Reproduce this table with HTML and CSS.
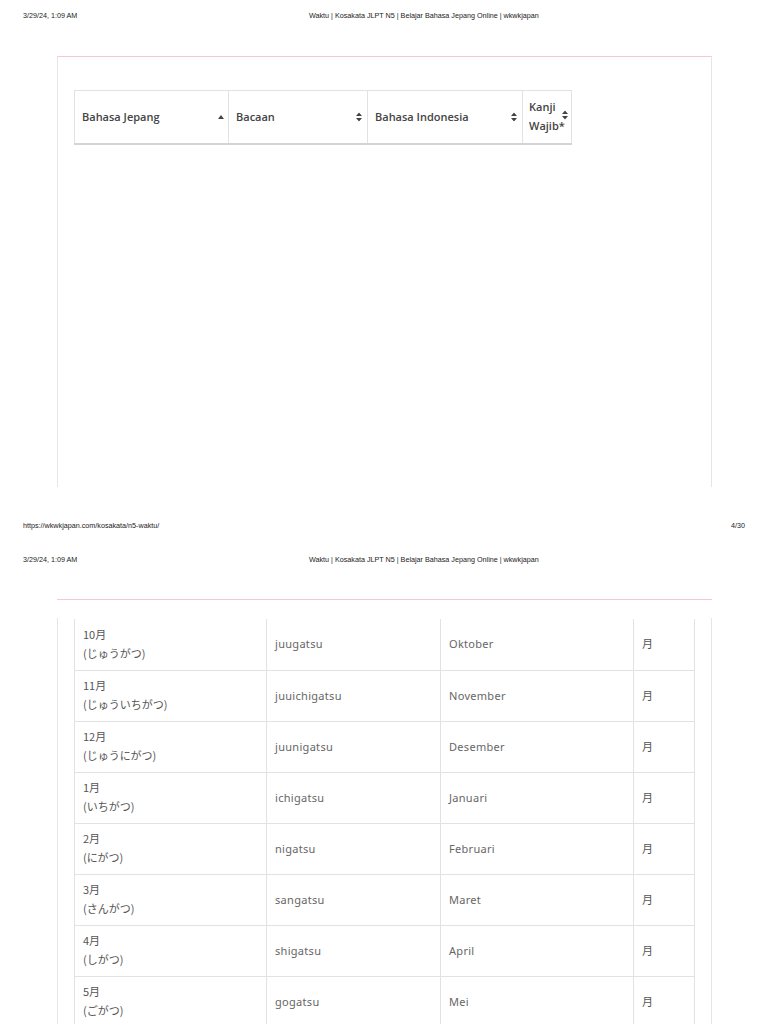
FILE: index.html
```html
<!DOCTYPE html>
<html lang="id">
<head>
<meta charset="utf-8">
<title>Waktu | Kosakata JLPT N5</title>
<link rel="stylesheet" href="styles.css">
</head>
<body>
<div class="print-head">
  <span class="ph-date">3/29/24, 1:09 AM</span>
  <span class="ph-title">Waktu | Kosakata JLPT N5 | Belajar Bahasa Jepang Online | wkwkjapan</span>
</div>

<div class="box box-first">
  <table class="vocab head-table">
    <colgroup><col class="c1a"><col class="c2a"><col class="c3a"><col class="c4a"></colgroup>
    <thead>
      <tr>
        <th>Bahasa Jepang
          <svg class="sort sort-up" width="6" height="4" viewBox="0 0 6 4"><path d="M0 4 L3 0 L6 4 Z" fill="#444"/></svg>
        </th>
        <th>Bacaan
          <svg class="sort" width="6" height="9" viewBox="0 0 6 9"><path d="M0 3.6 L3 0 L6 3.6 Z M0 5.4 L3 9 L6 5.4 Z" fill="#444"/></svg>
        </th>
        <th>Bahasa Indonesia
          <svg class="sort" width="6" height="9" viewBox="0 0 6 9"><path d="M0 3.6 L3 0 L6 3.6 Z M0 5.4 L3 9 L6 5.4 Z" fill="#444"/></svg>
        </th>
        <th class="th-narrow">Kanji Wajib*
          <svg class="sort sort-narrow" width="6" height="9" viewBox="0 0 6 9"><path d="M0 3.6 L3 0 L6 3.6 Z M0 5.4 L3 9 L6 5.4 Z" fill="#444"/></svg>
        </th>
      </tr>
    </thead>
  </table>
</div>

<div class="print-foot">
  <span>https://wkwkjapan.com/kosakata/n5-waktu/</span>
  <span>4/30</span>
</div>

<div class="print-head second">
  <span class="ph-date">3/29/24, 1:09 AM</span>
  <span class="ph-title">Waktu | Kosakata JLPT N5 | Belajar Bahasa Jepang Online | wkwkjapan</span>
</div>

<div class="pink-rule"></div>

<div class="box box-second">
  <table class="vocab body-table">
    <colgroup><col class="c1b"><col class="c2b"><col class="c3b"><col class="c4b"></colgroup>
    <tbody>
      <tr><td class="jp">10月<br>(じゅうがつ)</td><td class="lat">juugatsu</td><td class="lat">Oktober</td><td class="jp">月</td></tr>
      <tr><td class="jp">11月<br>(じゅういちがつ)</td><td class="lat">juuichigatsu</td><td class="lat">November</td><td class="jp">月</td></tr>
      <tr><td class="jp">12月<br>(じゅうにがつ)</td><td class="lat">juunigatsu</td><td class="lat">Desember</td><td class="jp">月</td></tr>
      <tr><td class="jp">1月<br>(いちがつ)</td><td class="lat">ichigatsu</td><td class="lat">Januari</td><td class="jp">月</td></tr>
      <tr><td class="jp">2月<br>(にがつ)</td><td class="lat">nigatsu</td><td class="lat">Februari</td><td class="jp">月</td></tr>
      <tr><td class="jp">3月<br>(さんがつ)</td><td class="lat">sangatsu</td><td class="lat">Maret</td><td class="jp">月</td></tr>
      <tr><td class="jp">4月<br>(しがつ)</td><td class="lat">shigatsu</td><td class="lat">April</td><td class="jp">月</td></tr>
      <tr><td class="jp">5月<br>(ごがつ)</td><td class="lat">gogatsu</td><td class="lat">Mei</td><td class="jp">月</td></tr>
    </tbody>
  </table>
</div>
</body>
</html>
```

FILE: styles.css
```css
html, body {
  margin: 0;
  padding: 0;
  background: #fff;
}
body {
  width: 768px;
  height: 1024px;
  overflow: hidden;
  font-family: "Noto Sans", "Noto Sans CJK JP", sans-serif;
}

.print-head {
  display: grid;
  grid-template-columns: 286px auto;
  padding: 12px 23px 0 23px;
  font-family: "Liberation Sans", Arial, sans-serif;
  font-size: 7.2px;
  line-height: 8px;
  color: #222;
}
.print-head.second {
  padding-top: 0;
  margin-top: 26px;
}

.print-foot {
  display: flex;
  justify-content: space-between;
  padding: 0 23px;
  margin-top: 35px;
  font-family: "Liberation Sans", Arial, sans-serif;
  font-size: 7.2px;
  line-height: 8px;
  color: #222;
}

.box {
  box-sizing: border-box;
  margin-left: 57px;
  width: 655px;
  border-left: 1px solid #e6e6e6;
  border-right: 1px solid #e6e6e6;
  padding-left: 16px;
}
.box-first {
  margin-top: 36px;
  height: 431px;
  border-top: 1px solid #f5c9d4;
  padding-top: 33px;
}
.pink-rule {
  margin: 35px 0 0 57px;
  width: 655px;
  height: 1px;
  background: #f5c9d4;
}
.box-second {
  margin-top: 18px;
  height: 420px;
  padding-top: 1px;
}

.vocab {
  border-collapse: collapse;
  table-layout: fixed;
}
.head-table { width: 497px; }
.c1a { width: 154px; }
.c2a { width: 139px; }
.c3a { width: 155px; }
.c4a { width: 49px; }

.head-table th {
  position: relative;
  height: 50px;
  padding: 0 18px 2px 7px;
  border: 1px solid #e2e2e2;
  border-bottom: 2px solid #d4d4d4;
  text-align: left;
  font-family: "Open Sans", "Noto Sans", sans-serif;
  font-size: 11px;
  font-weight: 600;
  line-height: 19px;
  color: #444;
  vertical-align: middle;
}
.head-table th.th-narrow {
  padding: 0 0 2px 6px;
}
.sort {
  position: absolute;
  right: 5px;
  top: 50%;
  transform: translateY(-50%);
}
.sort-up {
  right: 4px;
}
.sort-narrow {
  right: 3px;
  top: 46%;
}

.body-table { width: 620px; }
.c1b { width: 192px; }
.c2b { width: 174px; }
.c3b { width: 193px; }
.c4b { width: 61px; }

.body-table td {
  height: 51px;
  box-sizing: border-box;
  padding: 0 8px 1px 8px;
  border-left: 1px solid #e2e2e2;
  border-right: 1px solid #e2e2e2;
  border-bottom: 1px solid #e2e2e2;
  font-size: 11px;
  line-height: 19px;
  vertical-align: middle;
}
.body-table td.jp {
  color: #555;
  font-family: "Noto Sans CJK JP", "Noto Sans", sans-serif;
}
.body-table td.lat {
  color: #666;
  letter-spacing: 0.3px;
}
```
